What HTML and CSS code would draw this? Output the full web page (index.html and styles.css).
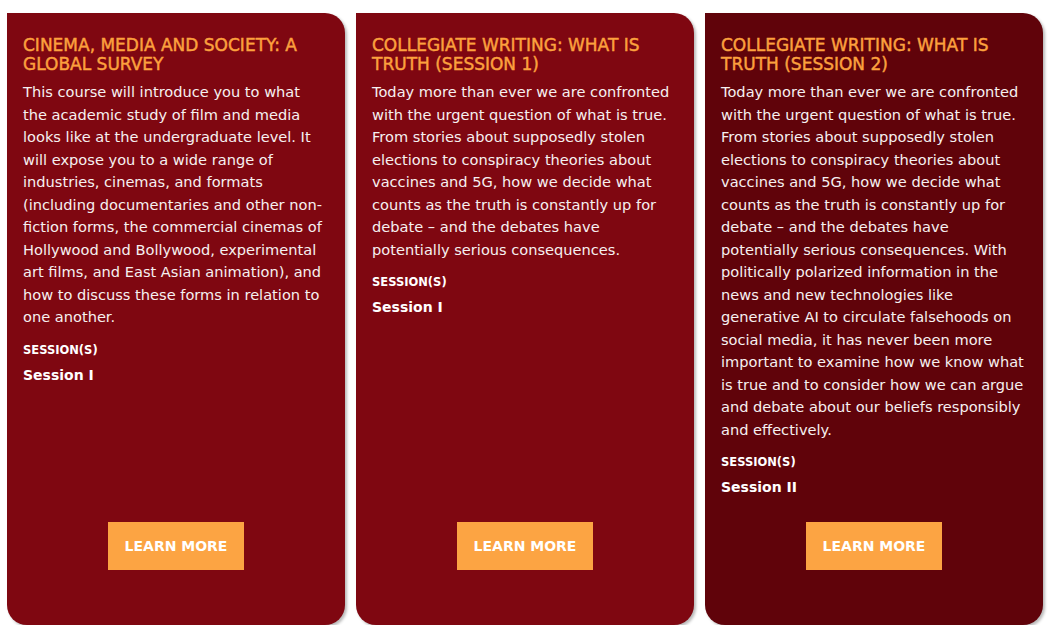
FILE: index.html
```html
<!DOCTYPE html>
<html lang="en">
<head>
<meta charset="utf-8">
<title>Courses</title>
<link rel="stylesheet" href="styles.css">
</head>
<body>
<div class="cards">
  <div class="card">
    <h3 class="card-title">Cinema, Media and Society: A Global Survey</h3>
    <p class="card-desc">This course will introduce you to what the academic study of film and media looks like at the undergraduate level. It will expose you to a wide range of industries, cinemas, and formats (including documentaries and other non-fiction forms, the commercial cinemas of Hollywood and Bollywood, experimental art films, and East Asian animation), and how to discuss these forms in relation to one another.</p>
    <div class="card-label">Session(s)</div>
    <div class="card-session">Session I</div>
    <a class="card-btn" href="#">Learn More</a>
  </div>
  <div class="card">
    <h3 class="card-title">Collegiate Writing: What is Truth (Session 1)</h3>
    <p class="card-desc">Today more than ever we are confronted with the urgent question of what is true. From stories about supposedly stolen elections to conspiracy theories about vaccines and 5G, how we decide what counts as the truth is constantly up for debate – and the debates have potentially serious consequences.</p>
    <div class="card-label">Session(s)</div>
    <div class="card-session">Session I</div>
    <a class="card-btn" href="#">Learn More</a>
  </div>
  <div class="card card-active">
    <h3 class="card-title">Collegiate Writing: What is Truth (Session 2)</h3>
    <p class="card-desc">Today more than ever we are confronted with the urgent question of what is true. From stories about supposedly stolen elections to conspiracy theories about vaccines and 5G, how we decide what counts as the truth is constantly up for debate – and the debates have potentially serious consequences. With politically polarized information in the news and new technologies like generative AI to circulate falsehoods on social media, it has never been more important to examine how we know what is true and to consider how we can argue and debate about our beliefs responsibly and effectively.</p>
    <div class="card-label">Session(s)</div>
    <div class="card-session">Session II</div>
    <a class="card-btn" href="#">Learn More</a>
  </div>
</div>
</body>
</html>
```

FILE: styles.css
```css
* { box-sizing: border-box; }
html, body { margin: 0; padding: 0; background: #fff; }
body {
  font-family: "DejaVu Sans", "Open Sans", sans-serif;
}
.cards {
  display: flex;
  align-items: stretch;
  gap: 11px;
  padding: 13px 0 0 7px;
}
.card {
  width: 338px;
  flex: 0 0 338px;
  background: #7f0711;
  border-radius: 0 20px 20px 20px;
  box-shadow: 2px 2px 3px rgba(0, 0, 0, 0.28);
  padding: 23px 16px 55px 16px;
  display: flex;
  flex-direction: column;
  color: #f6f0f0;
}
.card-active { background: #60030a; }
.card-title {
  margin: 0 2px 7px 0;
  font-size: 17px;
  line-height: 19px;
  font-weight: 400;
  -webkit-text-stroke: 0.45px #fca13e;
  text-transform: uppercase;
  color: #fca13e;
}
.card-desc {
  margin: 0 2px 0 0;
  font-size: 14.6px;
  line-height: 22.5px;
}
.card-label {
  margin-top: 13px;
  font-size: 11.5px;
  line-height: 16px;
  font-weight: 700;
  text-transform: uppercase;
  color: #fff;
}
.card-session {
  margin-top: 8px;
  font-size: 14px;
  line-height: 18px;
  font-weight: 700;
  color: #fff;
}
.card-btn {
  margin-top: auto;
  align-self: center;
  width: 136px;
  height: 48px;
  display: flex;
  align-items: center;
  justify-content: center;
  background: #fca443;
  color: #fff;
  font-size: 14px;
  font-weight: 700;
  text-transform: uppercase;
  text-decoration: none;
  letter-spacing: 0;
}
.card-active .card-session + .card-btn { margin-top: 26px; }
```
